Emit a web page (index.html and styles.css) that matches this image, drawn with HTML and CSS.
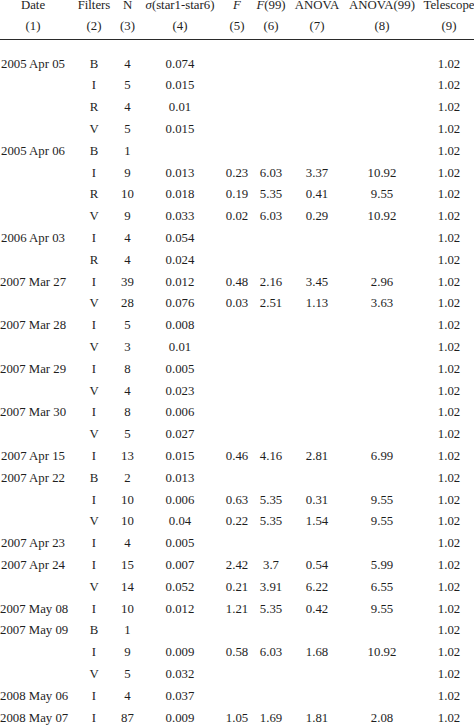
FILE: index.html
```html
<!DOCTYPE html>
<html lang="en">
<head>
<meta charset="utf-8">
<title>Observation log</title>
<link rel="stylesheet" href="styles.css">
</head>
<body>
<div class="page">
<table class="obs">
  <colgroup>
    <col class="c-date"><col class="c-filt"><col class="c-n"><col class="c-sig"><col class="c-f"><col class="c-f99"><col class="c-an"><col class="c-an99"><col class="c-tel">
  </colgroup>
  <thead>
    <tr class="h1">
      <th class="date">Date</th><th>Filters</th><th>N</th><th><i>σ</i>(star1-star6)</th><th><i>F</i></th><th><i>F</i>(99)</th><th>ANOVA</th><th>ANOVA(99)</th><th>Telescope</th>
    </tr>
    <tr class="h2">
      <th class="date">(1)</th><th>(2)</th><th>(3)</th><th>(4)</th><th>(5)</th><th>(6)</th><th>(7)</th><th>(8)</th><th>(9)</th>
    </tr>
  </thead>
  <tbody>
    <tr class="first"><td class="date">2005 Apr 05</td><td>B</td><td>4</td><td>0.074</td><td></td><td></td><td></td><td></td><td>1.02</td></tr>
    <tr><td class="date"></td><td>I</td><td>5</td><td>0.015</td><td></td><td></td><td></td><td></td><td>1.02</td></tr>
    <tr><td class="date"></td><td>R</td><td>4</td><td>0.01</td><td></td><td></td><td></td><td></td><td>1.02</td></tr>
    <tr><td class="date"></td><td>V</td><td>5</td><td>0.015</td><td></td><td></td><td></td><td></td><td>1.02</td></tr>
    <tr><td class="date">2005 Apr 06</td><td>B</td><td>1</td><td></td><td></td><td></td><td></td><td></td><td>1.02</td></tr>
    <tr><td class="date"></td><td>I</td><td>9</td><td>0.013</td><td>0.23</td><td>6.03</td><td>3.37</td><td>10.92</td><td>1.02</td></tr>
    <tr><td class="date"></td><td>R</td><td>10</td><td>0.018</td><td>0.19</td><td>5.35</td><td>0.41</td><td>9.55</td><td>1.02</td></tr>
    <tr><td class="date"></td><td>V</td><td>9</td><td>0.033</td><td>0.02</td><td>6.03</td><td>0.29</td><td>10.92</td><td>1.02</td></tr>
    <tr><td class="date">2006 Apr 03</td><td>I</td><td>4</td><td>0.054</td><td></td><td></td><td></td><td></td><td>1.02</td></tr>
    <tr><td class="date"></td><td>R</td><td>4</td><td>0.024</td><td></td><td></td><td></td><td></td><td>1.02</td></tr>
    <tr><td class="date">2007 Mar 27</td><td>I</td><td>39</td><td>0.012</td><td>0.48</td><td>2.16</td><td>3.45</td><td>2.96</td><td>1.02</td></tr>
    <tr><td class="date"></td><td>V</td><td>28</td><td>0.076</td><td>0.03</td><td>2.51</td><td>1.13</td><td>3.63</td><td>1.02</td></tr>
    <tr><td class="date">2007 Mar 28</td><td>I</td><td>5</td><td>0.008</td><td></td><td></td><td></td><td></td><td>1.02</td></tr>
    <tr><td class="date"></td><td>V</td><td>3</td><td>0.01</td><td></td><td></td><td></td><td></td><td>1.02</td></tr>
    <tr><td class="date">2007 Mar 29</td><td>I</td><td>8</td><td>0.005</td><td></td><td></td><td></td><td></td><td>1.02</td></tr>
    <tr><td class="date"></td><td>V</td><td>4</td><td>0.023</td><td></td><td></td><td></td><td></td><td>1.02</td></tr>
    <tr><td class="date">2007 Mar 30</td><td>I</td><td>8</td><td>0.006</td><td></td><td></td><td></td><td></td><td>1.02</td></tr>
    <tr><td class="date"></td><td>V</td><td>5</td><td>0.027</td><td></td><td></td><td></td><td></td><td>1.02</td></tr>
    <tr><td class="date">2007 Apr 15</td><td>I</td><td>13</td><td>0.015</td><td>0.46</td><td>4.16</td><td>2.81</td><td>6.99</td><td>1.02</td></tr>
    <tr><td class="date">2007 Apr 22</td><td>B</td><td>2</td><td>0.013</td><td></td><td></td><td></td><td></td><td>1.02</td></tr>
    <tr><td class="date"></td><td>I</td><td>10</td><td>0.006</td><td>0.63</td><td>5.35</td><td>0.31</td><td>9.55</td><td>1.02</td></tr>
    <tr><td class="date"></td><td>V</td><td>10</td><td>0.04</td><td>0.22</td><td>5.35</td><td>1.54</td><td>9.55</td><td>1.02</td></tr>
    <tr><td class="date">2007 Apr 23</td><td>I</td><td>4</td><td>0.005</td><td></td><td></td><td></td><td></td><td>1.02</td></tr>
    <tr><td class="date">2007 Apr 24</td><td>I</td><td>15</td><td>0.007</td><td>2.42</td><td>3.7</td><td>0.54</td><td>5.99</td><td>1.02</td></tr>
    <tr><td class="date"></td><td>V</td><td>14</td><td>0.052</td><td>0.21</td><td>3.91</td><td>6.22</td><td>6.55</td><td>1.02</td></tr>
    <tr><td class="date">2007 May 08</td><td>I</td><td>10</td><td>0.012</td><td>1.21</td><td>5.35</td><td>0.42</td><td>9.55</td><td>1.02</td></tr>
    <tr><td class="date">2007 May 09</td><td>B</td><td>1</td><td></td><td></td><td></td><td></td><td></td><td>1.02</td></tr>
    <tr><td class="date"></td><td>I</td><td>9</td><td>0.009</td><td>0.58</td><td>6.03</td><td>1.68</td><td>10.92</td><td>1.02</td></tr>
    <tr><td class="date"></td><td>V</td><td>5</td><td>0.032</td><td></td><td></td><td></td><td></td><td>1.02</td></tr>
    <tr><td class="date">2008 May 06</td><td>I</td><td>4</td><td>0.037</td><td></td><td></td><td></td><td></td><td>1.02</td></tr>
    <tr><td class="date">2008 May 07</td><td>I</td><td>87</td><td>0.009</td><td>1.05</td><td>1.69</td><td>1.81</td><td>2.08</td><td>1.02</td></tr>
  </tbody>
</table>
</div>
</body>
</html>
```

FILE: styles.css
```css
html, body {
  margin: 0;
  padding: 0;
  background: #ffffff;
}

.page {
  width: 474px;
  height: 726px;
  overflow: hidden;
}

.obs {
  table-layout: fixed;
  width: 479px;
  border-collapse: separate;
  border-spacing: 0;
  font-family: "Liberation Serif", "Times New Roman", serif;
  font-size: 12.8px;
  color: #1e1e1e;
}

.c-date { width: 72px; }
.c-filt { width: 44px; }
.c-n    { width: 23px; }
.c-sig  { width: 82px; }
.c-f    { width: 32px; }
.c-f99  { width: 36px; }
.c-an   { width: 56px; }
.c-an99 { width: 74px; }
.c-tel  { width: 60px; }

.obs th,
.obs td {
  padding: 0;
  font-weight: normal;
  text-align: center;
  white-space: nowrap;
  line-height: 21.8px;
}

.obs .date {
  padding-right: 6px;
}

.obs .h1 th {
  line-height: 11px;
  vertical-align: top;
}

.obs .h2 th {
  padding-top: 5px;
  padding-bottom: 1.7px;
  border-bottom: 1.4px solid #2a2a2a;
}

.obs .first td {
  padding-top: 13.2px;
}
```
